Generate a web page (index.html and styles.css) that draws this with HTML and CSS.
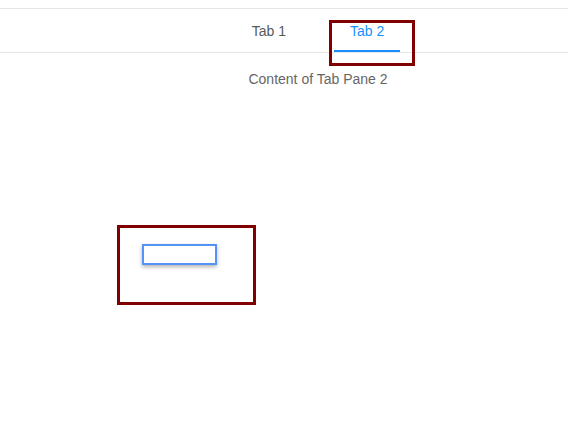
FILE: index.html
```html
<!DOCTYPE html>
<html>
<head>
<meta charset="utf-8">
<link rel="stylesheet" href="styles.css">
</head>
<body>
<div class="tabs">
  <div class="tab-nav">
    <div class="tab">Tab 1</div>
    <div class="tab tab-active">Tab 2</div>
  </div>
  <div class="tab-pane">Content of Tab Pane 2</div>
</div>
<div class="field"></div>
<div class="mark mark-tab"></div>
<div class="mark mark-field"></div>
</body>
</html>
```
FILE: styles.css
```css
html, body {
  margin: 0;
  padding: 0;
  background: #fff;
}
body {
  font-family: "Liberation Sans", Arial, sans-serif;
  font-size: 14px;
  position: relative;
  width: 568px;
  height: 447px;
  overflow: hidden;
}
.tabs {
  margin-top: 8px;
  border-top: 1px solid #e6e6e6;
}
.tab-nav {
  display: flex;
  justify-content: center;
  padding-left: 68px;
  height: 43px;
  border-bottom: 1px solid #e6e6e6;
}
.tab {
  position: relative;
  padding: 12px 16px 10px;
  line-height: 21px;
  color: #595959;
}
.tab + .tab {
  margin-left: 32px;
}
.tab-active {
  color: #1890ff;
}
.tab-active::after {
  content: "";
  position: absolute;
  left: 0;
  right: 0;
  bottom: 0;
  height: 2px;
  background: #1890ff;
}
.tab-pane {
  margin-top: 16px;
  padding-left: 68px;
  text-align: center;
  line-height: 21px;
  color: #666;
}
.field {
  box-sizing: border-box;
  margin: 154px 0 0 142px;
  width: 75px;
  height: 21px;
  border: 2px solid #5592f5;
  background: #fff;
  box-shadow: 0 2px 4px rgba(0, 0, 0, 0.3);
}
.mark {
  position: absolute;
  box-sizing: border-box;
  border: 3px solid #800000;
}
.mark-tab {
  left: 329px;
  top: 20px;
  width: 86px;
  height: 46px;
}
.mark-field {
  left: 117px;
  top: 225px;
  width: 139px;
  height: 80px;
}
```
